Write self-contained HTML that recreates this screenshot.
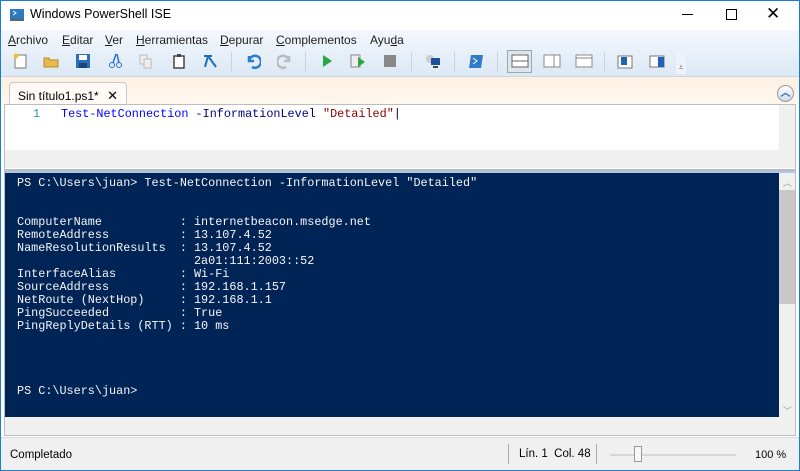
<!DOCTYPE html>
<html><head><style>
*{margin:0;padding:0;box-sizing:border-box}
body{width:800px;height:471px;overflow:hidden;background:#fff;font-family:"Liberation Sans",sans-serif;position:relative}
.abs{position:absolute}
.mono{font-family:"Liberation Mono",monospace;font-size:11.8px;white-space:pre}
.ic{position:absolute;top:53px;width:16px;height:16px}
.sep{position:absolute;top:52px;width:1px;height:20px;background:#c8d3e0}
</style></head><body>
<div class="abs" style="left:0;top:0;width:800px;height:471px;border:1px solid #1a7fd4"></div>
<svg class="abs" style="left:9px;top:7px" width="16" height="16"><rect x="1" y="2" width="14" height="9" fill="#2b7bc4"/><rect x="1" y="11" width="14" height="3" fill="#4a6a86"/><path d="M4 4l3 2-3 2" stroke="#fff" fill="none"/></svg>
<div class="abs" style="left:30px;top:7px;font-size:12.5px;color:#000">Windows PowerShell ISE</div>
<div class="abs" style="left:682px;top:14px;width:11px;height:1px;background:#000"></div>
<div class="abs" style="left:726px;top:9px;width:11px;height:11px;border:1px solid #000"></div>
<div class="abs" style="left:766px;top:4px;font-size:17px;color:#000">✕</div>
<div class="abs" style="left:1px;top:30px;width:798px;height:47px;background:linear-gradient(#f3f7fc,#dce8f5)"></div>
<div class="abs" style="left:1px;top:76px;width:798px;height:1px;background:#c9d6e4"></div>
<div class="abs" style="left:8px;top:33px;font-size:12px;color:#1e1e1e">
<span style="position:absolute;left:0"><u>A</u>rchivo</span><span style="position:absolute;left:54px"><u>E</u>ditar</span><span style="position:absolute;left:97px"><u>V</u>er</span><span style="position:absolute;left:128px"><u>H</u>erramientas</span><span style="position:absolute;left:212px"><u>D</u>epurar</span><span style="position:absolute;left:268px"><u>C</u>omplementos</span><span style="position:absolute;left:362px;white-space:nowrap">Ayu<u>d</u>a</span></div>
<svg class="ic" style="left:12px"><rect x="3" y="2" width="11" height="13" fill="#fff" stroke="#777"/><circle cx="4" cy="3" r="2.5" fill="#f4c02c"/></svg>
<svg class="ic" style="left:43px"><path d="M1 5h5l1 2h8v7H1z" fill="#e9b94e" stroke="#b88a2a"/></svg>
<svg class="ic" style="left:75px"><rect x="1" y="1" width="14" height="14" fill="#2c6fb5"/><rect x="4" y="2" width="8" height="5" fill="#fff"/><rect x="4" y="10" width="8" height="5" fill="#16467a"/></svg>
<svg class="ic" style="left:107px"><path d="M9 1L6 10M10 1L12 10" stroke="#2a6fd4" stroke-width="1.5"/><circle cx="5" cy="12" r="2.5" fill="none" stroke="#2a6fd4"/><circle cx="12" cy="12" r="2.5" fill="none" stroke="#2a6fd4"/></svg>
<svg class="ic" style="left:138px"><rect x="2" y="2" width="7" height="9" fill="#eee" stroke="#bbb"/><rect x="6" y="6" width="7" height="9" fill="#eee" stroke="#bbb"/></svg>
<svg class="ic" style="left:171px"><rect x="3" y="3" width="10" height="12" fill="#fff" stroke="#444" stroke-width="1.5"/><rect x="6" y="1" width="4" height="3" fill="#444"/></svg>
<svg class="ic" style="left:202px"><path d="M2 3h8M6 3L3 14M6 3l8 11" stroke="#1a6fc0" stroke-width="2" fill="none"/></svg>
<div class="sep" style="left:231px"></div>
<svg class="ic" style="left:245px"><path d="M4 3v5h5M4 8a6 6 0 1 1 3 6" stroke="#2b7bd0" stroke-width="2.5" fill="none"/></svg>
<svg class="ic" style="left:277px"><path d="M12 3v5H7M12 8a6 6 0 1 0-3 6" stroke="#bbb" stroke-width="2.5" fill="none"/></svg>
<div class="sep" style="left:305px"></div>
<svg class="ic" style="left:319px"><path d="M4 2l9 6-9 6z" fill="#28a745"/></svg>
<svg class="ic" style="left:350px"><rect x="1" y="2" width="9" height="12" fill="#eee" stroke="#888"/><path d="M8 4l7 5-7 5z" fill="#28a745"/></svg>
<svg class="ic" style="left:382px"><rect x="2" y="2" width="12" height="12" fill="#888"/></svg>
<div class="sep" style="left:411px"></div>
<svg class="ic" style="left:425px"><circle cx="5" cy="6" r="4" fill="#ccc"/><rect x="6" y="5" width="9" height="7" fill="#1d4ea0"/><rect x="8" y="13" width="5" height="2" fill="#444"/></svg>
<div class="sep" style="left:454px"></div>
<svg class="ic" style="left:468px"><path d="M3 2h12l-2 13H1z" fill="#2f7cc6"/><path d="M5 5l4 3-4 3" stroke="#fff" fill="none"/></svg>
<div class="sep" style="left:497px"></div>
<div class="abs" style="left:507px;top:50px;width:25px;height:23px;border:1px solid #9aa;background:#dfe6ee"></div>
<svg class="ic" style="left:511px;width:18px"><rect x="1" y="2" width="16" height="12" fill="#fff" stroke="#666"/><path d="M1 8h16" stroke="#666"/></svg>
<svg class="ic" style="left:543px;width:18px"><rect x="1" y="2" width="16" height="12" fill="#fff" stroke="#888"/><path d="M11 2v12" stroke="#888"/></svg>
<svg class="ic" style="left:575px;width:18px"><rect x="1" y="2" width="16" height="12" fill="#fff" stroke="#888"/><path d="M1 5h16" stroke="#888"/></svg>
<div class="sep" style="left:604px"></div>
<svg class="ic" style="left:617px"><rect x="1" y="3" width="14" height="12" fill="#fff" stroke="#777"/><rect x="4" y="4" width="6" height="8" fill="#1d62b5"/></svg>
<svg class="ic" style="left:649px"><rect x="1" y="3" width="14" height="11" fill="#fff" stroke="#777"/><rect x="9" y="4" width="6" height="10" fill="#1d62b5"/></svg>
<div class="abs" style="left:676px;top:52px;width:10px;height:22px;background:#eef3f9;font-size:8px;color:#555;text-align:center;padding-top:11px">⩡</div>
<div class="abs" style="left:1px;top:77px;width:798px;height:28px;background:linear-gradient(#fdf0e2,#fff8f0)"></div>
<div class="abs" style="left:9px;top:82px;width:118px;height:24px;background:#fffaf5;border:1px solid #c8c8c8;border-bottom:none;border-radius:4px 4px 0 0;font-size:12px;padding:5px 0 0 8px;color:#000">Sin título1.ps1* <span style="font-size:13px;margin-left:5px">✕</span></div>
<div class="abs" style="left:777px;top:85px;width:17px;height:17px;border-radius:50%;background:linear-gradient(#fff,#cdd8e6);border:1px solid #999;color:#2a64b3;font-size:10px;text-align:center;line-height:15px;font-weight:bold">︿</div>
<div class="abs" style="left:4px;top:104px;width:792px;height:66px;border:1px solid #bcbcbc;background:#fff"></div>
<div class="abs" style="left:5px;top:150px;width:775px;height:18px;background:#f0f0f0"></div>
<div class="abs" style="left:779px;top:105px;width:16px;height:63px;background:#f0f0f0"></div>
<div class="abs mono" style="left:33px;top:107px;color:#2b91af">1</div>
<div class="abs mono" style="left:61px;top:107px"><span style="color:#0000ff">Test-NetConnection</span> <span style="color:#000080">-InformationLevel</span> <span style="color:#8b0000">"Detailed"</span><span style="color:#000">|</span></div>
<div class="abs" style="left:4px;top:170px;width:792px;height:266px;border:1px solid #bcbcbc;background:#f0f0f0"></div>
<div class="abs" style="left:5px;top:171px;width:790px;height:2px;background:#a8c8ec"></div>
<div class="abs" style="left:5px;top:173px;width:774px;height:244px;background:#012456"></div>
<div class="abs" style="left:779px;top:173px;width:16px;height:244px;background:#f0f0f0"></div>
<div class="abs" style="left:779px;top:190px;width:16px;height:114px;background:#c8c8c8"></div>
<div class="abs" style="left:783px;top:176px;font-size:9px;color:#999">︿</div>
<div class="abs" style="left:783px;top:404px;font-size:9px;color:#999">﹀</div>
<div class="abs mono" style="left:17px;top:177px;color:#f5f5f5;line-height:13px">PS C:\Users\juan&gt; Test-NetConnection -InformationLevel "Detailed"


ComputerName           : internetbeacon.msedge.net
RemoteAddress          : 13.107.4.52
NameResolutionResults  : 13.107.4.52
                         2a01:111:2003::52
InterfaceAlias         : Wi-Fi
SourceAddress          : 192.168.1.157
NetRoute (NextHop)     : 192.168.1.1
PingSucceeded          : True
PingReplyDetails (RTT) : 10 ms




PS C:\Users\juan&gt;</div>
<div class="abs" style="left:1px;top:437px;width:798px;height:33px;background:#f0f0f0;border-top:1px solid #dadada"></div>
<div class="abs" style="left:10px;top:449px;font-size:11.5px;color:#000">Completado</div>
<div class="abs" style="left:508px;top:444px;width:1px;height:20px;background:#aaa"></div>
<div class="abs" style="left:519px;top:448px;font-size:11.5px;color:#000">Lín. 1&nbsp; Col. 48</div>
<div class="abs" style="left:596px;top:444px;width:1px;height:20px;background:#aaa"></div>
<div class="abs" style="left:610px;top:454px;width:126px;height:2px;background:#d6d6d6"></div>
<div class="abs" style="left:634px;top:446px;width:8px;height:16px;background:#f8f8f8;border:1px solid #999"></div>
<div class="abs" style="left:755px;top:449px;font-size:11px;color:#000">100 %</div>
</body></html>
